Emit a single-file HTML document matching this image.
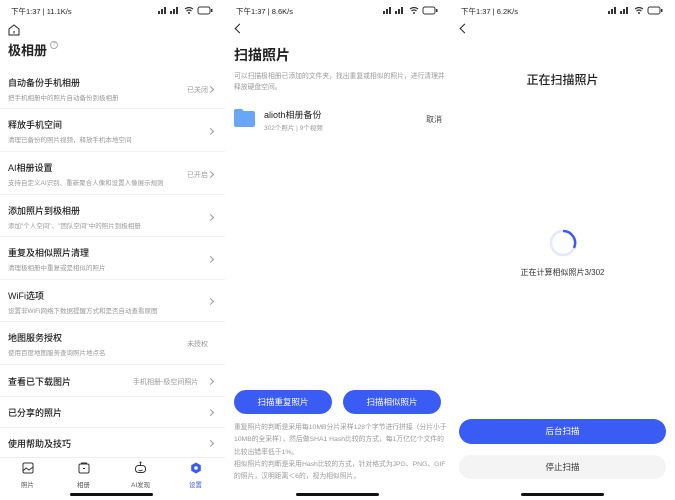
<!DOCTYPE html>
<html><head><meta charset="utf-8"><style>
*{margin:0;padding:0;box-sizing:border-box}
body{width:675px;height:500px;background:#fff;font-family:"Liberation Sans","Noto Sans CJK SC",sans-serif;color:#222;position:relative;overflow:hidden}
.a{position:absolute;white-space:nowrap}
.sb{font-size:7.5px;color:#222;top:6px}
.t{font-size:9px;color:#1a1a1a;font-weight:500}
.s{font-size:6.5px;color:#999}
.r{font-size:7px;color:#999}
.chev{position:absolute;width:5px;height:5px;border-right:1px solid #999;border-top:1px solid #999;transform:rotate(45deg)}
.sep{position:absolute;left:0;width:225px;height:1px;background:#f0f0f0}
.btn{position:absolute;background:#3b5bf5;color:#fff;font-size:8.5px;text-align:center;border-radius:13px}
.ind{position:absolute;top:493px;width:83px;height:3px;background:#111;border-radius:2px}
.back{position:absolute;width:7px;height:7px;border-left:1.3px solid #222;border-bottom:1.3px solid #222;transform:rotate(45deg)}
.p{font-size:6.8px;color:#999;line-height:12.3px}
</style></head><body>
<div class="a sb" style="left:11px">下午1:37 | 11.1K/s</div>
<div class="a sb" style="left:236px">下午1:37 | 8.6K/s</div>
<div class="a sb" style="left:461px">下午1:37 | 6.2K/s</div>
<svg class="a" style="left:158px;top:6px" width="56" height="9"><g fill="#333"><rect x="0" y="5" width="2" height="3"/><rect x="3" y="3" width="2" height="5"/><rect x="6" y="1" width="2" height="7"/><rect x="12" y="5" width="2" height="3"/><rect x="15" y="3" width="2" height="5"/><rect x="18" y="1" width="2" height="7"/></g><path d="M27 3 Q31 0 35 3 M28.5 5 Q31 3 33.5 5" stroke="#333" fill="none" stroke-width="1.2"/><circle cx="31" cy="7" r="1" fill="#333"/><rect x="40" y="1" width="12" height="7" rx="2" fill="none" stroke="#333"/><rect x="53" y="3" width="1.5" height="3" fill="#333"/></svg>
<svg class="a" style="left:383px;top:6px" width="56" height="9"><g fill="#333"><rect x="0" y="5" width="2" height="3"/><rect x="3" y="3" width="2" height="5"/><rect x="6" y="1" width="2" height="7"/><rect x="12" y="5" width="2" height="3"/><rect x="15" y="3" width="2" height="5"/><rect x="18" y="1" width="2" height="7"/></g><path d="M27 3 Q31 0 35 3 M28.5 5 Q31 3 33.5 5" stroke="#333" fill="none" stroke-width="1.2"/><circle cx="31" cy="7" r="1" fill="#333"/><rect x="40" y="1" width="12" height="7" rx="2" fill="none" stroke="#333"/><rect x="53" y="3" width="1.5" height="3" fill="#333"/></svg>
<svg class="a" style="left:608px;top:6px" width="56" height="9"><g fill="#333"><rect x="0" y="5" width="2" height="3"/><rect x="3" y="3" width="2" height="5"/><rect x="6" y="1" width="2" height="7"/><rect x="12" y="5" width="2" height="3"/><rect x="15" y="3" width="2" height="5"/><rect x="18" y="1" width="2" height="7"/></g><path d="M27 3 Q31 0 35 3 M28.5 5 Q31 3 33.5 5" stroke="#333" fill="none" stroke-width="1.2"/><circle cx="31" cy="7" r="1" fill="#333"/><rect x="40" y="1" width="12" height="7" rx="2" fill="none" stroke="#333"/><rect x="53" y="3" width="1.5" height="3" fill="#333"/></svg>

<svg class="a" style="left:8px;top:24px" width="12" height="12"><path d="M1 5 L6 1 L11 5 V11 H1 Z" fill="none" stroke="#222" stroke-width="1"/><rect x="5.5" y="7" width="1" height="2.5" fill="#222"/></svg>
<div class="a" style="left:8px;top:40px;font-size:13px;font-weight:bold">极相册</div>
<div class="a" style="left:50px;top:41px;width:8px;height:8px;border:1px solid #aaa;border-radius:50%;font-size:5.5px;color:#aaa;text-align:center;line-height:6px">?</div>

<div class="a t" style="left:8px;top:76px">自动备份手机相册</div><div class="a s" style="left:8px;top:92px">把手机相册中的照片自动备份到极相册</div><div class="a r" style="left:187px;top:85px">已关闭</div><div class="chev" style="left:208px;top:87px"></div>
<div class="sep" style="top:108px"></div>
<div class="a t" style="left:8px;top:118px">释放手机空间</div><div class="a s" style="left:8px;top:134px">清理已备份的照片视频，释放手机本地空间</div><div class="chev" style="left:208px;top:129px"></div>
<div class="sep" style="top:151px"></div>
<div class="a t" style="left:8px;top:161px">AI相册设置</div><div class="a s" style="left:8px;top:177px">支持自定义AI识别、重新聚合人像和设置人像展示规则</div><div class="a r" style="left:187px;top:170px">已开启</div><div class="chev" style="left:208px;top:172px"></div>
<div class="sep" style="top:194px"></div>
<div class="a t" style="left:8px;top:204px">添加照片到极相册</div><div class="a s" style="left:8px;top:220px">添加"个人空间"、"团队空间"中的照片到极相册</div><div class="chev" style="left:208px;top:215px"></div>
<div class="sep" style="top:236px"></div>
<div class="a t" style="left:8px;top:246px">重复及相似照片清理</div><div class="a s" style="left:8px;top:262px">清理极相册中重复或是相似的照片</div><div class="chev" style="left:208px;top:257px"></div>
<div class="sep" style="top:279px"></div>
<div class="a t" style="left:8px;top:289px">WiFi选项</div><div class="a s" style="left:8px;top:305px">设置非WiFi网络下数据提醒方式和是否自动查看原图</div><div class="chev" style="left:208px;top:299px"></div>
<div class="sep" style="top:321px"></div>
<div class="a t" style="left:8px;top:331px">地图服务授权</div><div class="a s" style="left:8px;top:347px">使用百度地图服务查询照片地点名</div><div class="a r" style="left:187px;top:339px">未授权</div>
<div class="sep" style="top:364px"></div>
<div class="a t" style="left:8px;top:375px">查看已下载图片</div><div class="a r" style="left:133px;top:377px">手机相册-极空间照片</div><div class="chev" style="left:208px;top:379px"></div>
<div class="sep" style="top:396px"></div>
<div class="a t" style="left:8px;top:406px">已分享的照片</div><div class="chev" style="left:208px;top:410px"></div>
<div class="sep" style="top:427px"></div>
<div class="a t" style="left:8px;top:437px">使用帮助及技巧</div><div class="chev" style="left:208px;top:441px"></div>
<div class="a" style="left:0;top:457px;width:225px;height:1px;background:#eee"></div>
<svg class="a" style="left:22px;top:462px" width="12" height="12"><rect x="1" y="1" width="10" height="10" rx="1.5" fill="none" stroke="#333"/><path d="M1 9 L4 6 L7 8 L11 5" fill="none" stroke="#333"/></svg>
<svg class="a" style="left:78px;top:462px" width="12" height="12"><rect x="1" y="2" width="10" height="9" rx="1.5" fill="none" stroke="#333"/><path d="M3 1h6" stroke="#333"/><rect x="5" y="6" width="2" height="1" fill="#333"/></svg>
<svg class="a" style="left:134px;top:461px" width="13" height="13"><circle cx="6.5" cy="1.5" r="1" fill="#333"/><path d="M6.5 2.5v2" stroke="#333"/><rect x="1.5" y="4.5" width="10" height="7" rx="3" fill="none" stroke="#333"/><path d="M4.5 9 Q6.5 10.5 8.5 9" stroke="#333" fill="none"/></svg>
<svg class="a" style="left:190px;top:462px" width="12" height="12"><path d="M6 0.5 L10.8 3.2 V8.8 L6 11.5 L1.2 8.8 V3.2 Z" fill="#3b5bf5"/><circle cx="6" cy="6" r="1.8" fill="#fff"/></svg>
<div class="a" style="left:21px;top:479px;font-size:6.5px;color:#555">照片</div>
<div class="a" style="left:77px;top:479px;font-size:6.5px;color:#555">相册</div>
<div class="a" style="left:131px;top:479px;font-size:6.5px;color:#555">AI发现</div>
<div class="a" style="left:189px;top:479px;font-size:6.5px;color:#3b5bf5">设置</div>
<div class="ind" style="left:70px"></div>

<div class="back" style="left:236px;top:25px"></div>
<div class="a" style="left:234px;top:45px;font-size:14px;font-weight:bold">扫描照片</div>
<div class="a p" style="left:234px;top:71px;white-space:normal;width:212px;line-height:11px">可以扫描极相册已添加的文件夹，找出重复或相似的照片，进行清理并释放硬盘空间。</div>
<svg class="a" style="left:233px;top:108px" width="23" height="20"><path d="M1 3 Q1 1 3 1 H9 L11 3 H20 Q22 3 22 5 V17 Q22 19 20 19 H3 Q1 19 1 17 Z" fill="#6aa6f8"/></svg>
<div class="a" style="left:264px;top:108px;font-size:9px;color:#222">alioth相册备份</div>
<div class="a s" style="left:264px;top:122px">302个照片 | 9个视频</div>
<div class="a" style="left:426px;top:114px;font-size:8px;color:#444">取消</div>
<div class="btn" style="left:234px;top:390px;width:98px;height:24px;line-height:24px">扫描重复照片</div>
<div class="btn" style="left:343px;top:390px;width:98px;height:24px;line-height:24px">扫描相似照片</div>
<div class="a p" style="left:234px;top:422px;white-space:normal;width:214px">重复照片的判断是采用每10MB分片采样128个字节进行拼接（分片小于10MB的全采样），然后做SHA1 Hash比较的方式，每1万亿亿个文件的比较出错率低于1%。<br>相似照片的判断是采用Hash比较的方式，针对格式为JPG、PNG、GIF的照片，汉明距离＜6的，视为相似照片。</div>
<div class="ind" style="left:296px"></div>

<div class="back" style="left:461px;top:25px"></div>
<div class="a" style="left:450px;width:225px;text-align:center;top:71px;font-size:12px;font-weight:500">正在扫描照片</div>
<svg class="a" style="left:548px;top:228px" width="30" height="30"><circle cx="15" cy="15" r="12" fill="none" stroke="#e4e8fb" stroke-width="2.5"/><path d="M15 3 A12 12 0 0 1 26 20" fill="none" stroke="#3b5bf5" stroke-width="2.5"/></svg>
<div class="a" style="left:450px;width:225px;text-align:center;top:267px;font-size:8px;color:#333">正在计算相似照片3/302</div>
<div class="btn" style="left:459px;top:419px;width:207px;height:25px;line-height:25px">后台扫描</div>
<div class="a" style="left:459px;top:455px;width:207px;height:24px;line-height:24px;background:#f4f4f4;border-radius:12px;text-align:center;font-size:8.5px;color:#333">停止扫描</div>
<div class="ind" style="left:521px"></div>
</body></html>
